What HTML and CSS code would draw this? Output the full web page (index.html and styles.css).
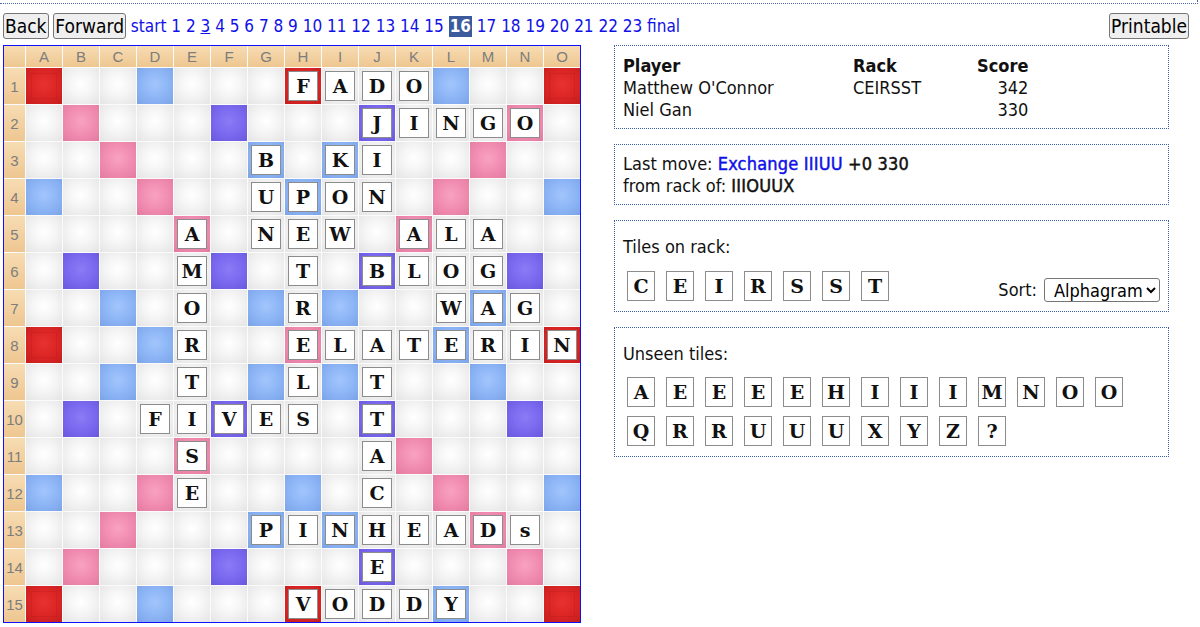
FILE: index.html
```html
<!DOCTYPE html>
<html>
<head>
<meta charset="utf-8">
<title>Game viewer</title>
<link rel="stylesheet" href="styles.css">
</head>
<body>
<div class="topline"></div>
<div class="nav">
  <div class="navleft"><button>Back</button> <button>Forward</button> <a href="#">start</a> <a href="#">1</a> <a href="#">2</a> <a href="#" class="hov">3</a> <a href="#">4</a> <a href="#">5</a> <a href="#">6</a> <a href="#">7</a> <a href="#">8</a> <a href="#">9</a> <a href="#">10</a> <a href="#">11</a> <a href="#">12</a> <a href="#">13</a> <a href="#">14</a> <a href="#">15</a> <span class="cur">16</span> <a href="#">17</a> <a href="#">18</a> <a href="#">19</a> <a href="#">20</a> <a href="#">21</a> <a href="#">22</a> <a href="#">23</a> <a href="#">final</a></div>
  <button class="print">Printable</button>
</div>
<div class="main">
  <div class="board">
    <i class="h"></i><i class="h">A</i><i class="h">B</i><i class="h">C</i><i class="h">D</i><i class="h">E</i><i class="h">F</i><i class="h">G</i><i class="h">H</i><i class="h">I</i><i class="h">J</i><i class="h">K</i><i class="h">L</i><i class="h">M</i><i class="h">N</i><i class="h">O</i>

    <i class="h">1</i><i class="c tw"></i><i class="c"></i><i class="c"></i><i class="c dl"></i><i class="c"></i><i class="c"></i><i class="c"></i><i class="c tw"><b class="t">F</b></i><i class="c"><b class="t">A</b></i><i class="c"><b class="t">D</b></i><i class="c"><b class="t">O</b></i><i class="c dl"></i><i class="c"></i><i class="c"></i><i class="c tw"></i>

    <i class="h">2</i><i class="c"></i><i class="c dw"></i><i class="c"></i><i class="c"></i><i class="c"></i><i class="c tl"></i><i class="c"></i><i class="c"></i><i class="c"></i><i class="c tl"><b class="t">J</b></i><i class="c"><b class="t">I</b></i><i class="c"><b class="t">N</b></i><i class="c"><b class="t">G</b></i><i class="c dw"><b class="t">O</b></i><i class="c"></i>

    <i class="h">3</i><i class="c"></i><i class="c"></i><i class="c dw"></i><i class="c"></i><i class="c"></i><i class="c"></i><i class="c dl"><b class="t">B</b></i><i class="c"></i><i class="c dl"><b class="t">K</b></i><i class="c"><b class="t">I</b></i><i class="c"></i><i class="c"></i><i class="c dw"></i><i class="c"></i><i class="c"></i>

    <i class="h">4</i><i class="c dl"></i><i class="c"></i><i class="c"></i><i class="c dw"></i><i class="c"></i><i class="c"></i><i class="c"><b class="t">U</b></i><i class="c dl"><b class="t">P</b></i><i class="c"><b class="t">O</b></i><i class="c"><b class="t">N</b></i><i class="c"></i><i class="c dw"></i><i class="c"></i><i class="c"></i><i class="c dl"></i>

    <i class="h">5</i><i class="c"></i><i class="c"></i><i class="c"></i><i class="c"></i><i class="c dw"><b class="t">A</b></i><i class="c"></i><i class="c"><b class="t">N</b></i><i class="c"><b class="t">E</b></i><i class="c"><b class="t">W</b></i><i class="c"></i><i class="c dw"><b class="t">A</b></i><i class="c"><b class="t">L</b></i><i class="c"><b class="t">A</b></i><i class="c"></i><i class="c"></i>

    <i class="h">6</i><i class="c"></i><i class="c tl"></i><i class="c"></i><i class="c"></i><i class="c"><b class="t">M</b></i><i class="c tl"></i><i class="c"></i><i class="c"><b class="t">T</b></i><i class="c"></i><i class="c tl"><b class="t">B</b></i><i class="c"><b class="t">L</b></i><i class="c"><b class="t">O</b></i><i class="c"><b class="t">G</b></i><i class="c tl"></i><i class="c"></i>

    <i class="h">7</i><i class="c"></i><i class="c"></i><i class="c dl"></i><i class="c"></i><i class="c"><b class="t">O</b></i><i class="c"></i><i class="c dl"></i><i class="c"><b class="t">R</b></i><i class="c dl"></i><i class="c"></i><i class="c"></i><i class="c"><b class="t">W</b></i><i class="c dl"><b class="t">A</b></i><i class="c"><b class="t">G</b></i><i class="c"></i>

    <i class="h">8</i><i class="c tw"></i><i class="c"></i><i class="c"></i><i class="c dl"></i><i class="c"><b class="t">R</b></i><i class="c"></i><i class="c"></i><i class="c dw"><b class="t">E</b></i><i class="c"><b class="t">L</b></i><i class="c"><b class="t">A</b></i><i class="c"><b class="t">T</b></i><i class="c dl"><b class="t">E</b></i><i class="c"><b class="t">R</b></i><i class="c"><b class="t">I</b></i><i class="c tw"><b class="t">N</b></i>

    <i class="h">9</i><i class="c"></i><i class="c"></i><i class="c dl"></i><i class="c"></i><i class="c"><b class="t">T</b></i><i class="c"></i><i class="c dl"></i><i class="c"><b class="t">L</b></i><i class="c dl"></i><i class="c"><b class="t">T</b></i><i class="c"></i><i class="c"></i><i class="c dl"></i><i class="c"></i><i class="c"></i>

    <i class="h">10</i><i class="c"></i><i class="c tl"></i><i class="c"></i><i class="c"><b class="t">F</b></i><i class="c"><b class="t">I</b></i><i class="c tl"><b class="t">V</b></i><i class="c"><b class="t">E</b></i><i class="c"><b class="t">S</b></i><i class="c"></i><i class="c tl"><b class="t">T</b></i><i class="c"></i><i class="c"></i><i class="c"></i><i class="c tl"></i><i class="c"></i>

    <i class="h">11</i><i class="c"></i><i class="c"></i><i class="c"></i><i class="c"></i><i class="c dw"><b class="t">S</b></i><i class="c"></i><i class="c"></i><i class="c"></i><i class="c"></i><i class="c"><b class="t">A</b></i><i class="c dw"></i><i class="c"></i><i class="c"></i><i class="c"></i><i class="c"></i>

    <i class="h">12</i><i class="c dl"></i><i class="c"></i><i class="c"></i><i class="c dw"></i><i class="c"><b class="t">E</b></i><i class="c"></i><i class="c"></i><i class="c dl"></i><i class="c"></i><i class="c"><b class="t">C</b></i><i class="c"></i><i class="c dw"></i><i class="c"></i><i class="c"></i><i class="c dl"></i>

    <i class="h">13</i><i class="c"></i><i class="c"></i><i class="c dw"></i><i class="c"></i><i class="c"></i><i class="c"></i><i class="c dl"><b class="t">P</b></i><i class="c"><b class="t">I</b></i><i class="c dl"><b class="t">N</b></i><i class="c"><b class="t">H</b></i><i class="c"><b class="t">E</b></i><i class="c"><b class="t">A</b></i><i class="c dw"><b class="t">D</b></i><i class="c"><b class="t">s</b></i><i class="c"></i>

    <i class="h">14</i><i class="c"></i><i class="c dw"></i><i class="c"></i><i class="c"></i><i class="c"></i><i class="c tl"></i><i class="c"></i><i class="c"></i><i class="c"></i><i class="c tl"><b class="t">E</b></i><i class="c"></i><i class="c"></i><i class="c"></i><i class="c dw"></i><i class="c"></i>

    <i class="h">15</i><i class="c tw"></i><i class="c"></i><i class="c"></i><i class="c dl"></i><i class="c"></i><i class="c"></i><i class="c"></i><i class="c tw"><b class="t">V</b></i><i class="c"><b class="t">O</b></i><i class="c"><b class="t">D</b></i><i class="c"><b class="t">D</b></i><i class="c dl"><b class="t">Y</b></i><i class="c"></i><i class="c"></i><i class="c tw"></i>
  </div>

  <div class="side">
    <div class="box players">
      <b>Player</b><b>Rack</b><b>Score</b>
      <span>Matthew O'Connor</span><span>CEIRSST</span><span class="num">342</span>
      <span>Niel Gan</span><span></span><span class="num">330</span>
    </div>
    <div class="box move">
      <div>Last move: <a href="#" class="mv">Exchange IIIUU</a> <span class="strong">+0 330</span></div>
      <div>from rack of: <span class="strong">IIIOUUX</span></div>
    </div>
    <div class="box rackbox">
      <div class="label">Tiles on rack:</div>
      <div class="rackrow">
        <div class="tiles">
          <b class="rt">C</b><b class="rt">E</b><b class="rt">I</b><b class="rt">R</b><b class="rt">S</b><b class="rt">S</b><b class="rt">T</b>
        </div>
        <div class="sort">Sort: <select><option>Alphagram</option></select></div>
      </div>
    </div>
    <div class="box unseen">
      <div class="label">Unseen tiles:</div>
      <div class="tiles">
        <b class="rt">A</b><b class="rt">E</b><b class="rt">E</b><b class="rt">E</b><b class="rt">E</b><b class="rt">H</b><b class="rt">I</b><b class="rt">I</b><b class="rt">I</b><b class="rt">M</b><b class="rt">N</b><b class="rt">O</b><b class="rt">O</b>
      </div>
      <div class="tiles">
        <b class="rt">Q</b><b class="rt">R</b><b class="rt">R</b><b class="rt">U</b><b class="rt">U</b><b class="rt">U</b><b class="rt">X</b><b class="rt">Y</b><b class="rt">Z</b><b class="rt">?</b>
      </div>
    </div>
  </div>
</div>
</body>
</html>
```

FILE: styles.css
```css
html, body {
  margin: 0;
  padding: 0;
  background: #ffffff;
}
body {
  font-family: "DejaVu Sans Condensed", "DejaVu Sans", Verdana, sans-serif;
  font-stretch: condensed;
  font-size: 18px;
  line-height: 22px;
  color: #111111;
}

.topline {
  height: 3px;
  margin-right: 2px;
  border-bottom: 1px dotted #4a67a8;
  border-right: 1px dotted #4a67a8;
}

.nav {
  display: flex;
  align-items: center;
  padding: 9px 11px 0 3px;
}
.navleft {
  white-space: nowrap;
  font-size: 17px;
}
.nav button {
  font-family: "DejaVu Sans Condensed", "DejaVu Sans", Verdana, sans-serif;
  font-stretch: condensed;
  font-size: 19px;
  line-height: 22px;
  padding: 1px 1px;
  border: 1px solid #767676;
  border-radius: 3px;
  background: #efefef;
  color: #000;
  vertical-align: middle;
}
.nav .print {
  margin-left: auto;
  padding: 1px 1px;
}
.nav a {
  color: #1010e8;
  text-decoration: none;
  vertical-align: middle;
}
.nav a.hov {
  text-decoration: underline;
}
.nav .cur {
  display: inline-block;
  vertical-align: middle;
  background: #3b5b9c;
  color: #ffffff;
  font-weight: bold;
  padding: 0 1px;
  line-height: 21px;
}

.main {
  display: flex;
  align-items: flex-start;
  margin-top: 6px;
  padding-left: 3px;
}

/* Board */
.board {
  display: grid;
  grid-template-columns: 21px repeat(15, 36px);
  grid-template-rows: 21px repeat(15, 36px);
  gap: 1px;
  background: #fbfbfb;
  border: 1px solid #1010ff;
}
.board i {
  font-style: normal;
}
.h {
  display: flex;
  align-items: center;
  justify-content: center;
  background: linear-gradient(#f7dcb3, #eec690);
  color: #7d7d7d;
  font-family: "Liberation Sans", Arial, sans-serif;
  font-stretch: normal;
  font-size: 15px;
  line-height: 1;
}
.c {
  display: flex;
  align-items: center;
  justify-content: center;
  background: radial-gradient(circle at 50% 45%, #ffffff 0%, #f6f6f6 40%, #e4e4e4 100%);
}
.tw {
  background: radial-gradient(circle at 50% 45%, #e83232 0%, #dc2626 50%, #c51d1d 100%);
}
.tw:empty {
  outline: 1px solid rgba(120, 0, 0, 0.1);
  outline-offset: -6px;
}
.dw {
  background: radial-gradient(circle at 50% 45%, #f9a2c0 0%, #f18db1 50%, #e37aa0 100%);
}
.dl {
  background: radial-gradient(circle at 50% 45%, #a2c5fc 0%, #8eb6f6 50%, #7aa3e8 100%);
}
.tl {
  background: radial-gradient(circle at 50% 45%, #8a7bf6 0%, #7b6aef 50%, #6858dc 100%);
}
.t, .rt {
  display: flex;
  align-items: center;
  justify-content: center;
  box-sizing: border-box;
  background: #ffffff;
  border: 1px solid #8c8c8c;
  font-family: "DejaVu Serif", "Liberation Serif", serif;
  font-stretch: normal;
  font-weight: bold;
  color: #111;
}
.t {
  width: 30px;
  height: 30px;
  font-size: 19px;
}

/* Side panels */
.side {
  width: 555px;
  margin-left: 33px;
  display: flex;
  flex-direction: column;
  gap: 15px;
}
.box {
  border: 1px dotted #3f5fa8;
  padding: 8px 8px 7px 8px;
}
.players {
  padding-top: 9px;
  display: grid;
  grid-template-columns: 230px 124px max-content;
}
.players .num {
  text-align: right;
}
.move .mv {
  color: #1010e8;
  text-decoration: none;
}
.move .mv, .move .strong {
  -webkit-text-stroke: 0.45px currentColor;
  letter-spacing: 0.2px;
}
.rackbox, .unseen {
  padding-top: 15px;
  padding-bottom: 10px;
}
.label {
  margin-bottom: 13px;
}
.unseen .label {
  margin-bottom: 12px;
}
.rackrow {
  display: flex;
  align-items: flex-end;
  justify-content: space-between;
}
.tiles {
  display: flex;
  gap: 11px;
  padding-left: 4px;
}
.unseen .tiles + .tiles {
  margin-top: 9px;
}
.rt {
  width: 28px;
  height: 30px;
  font-size: 19px;
}
.sort {
  display: flex;
  align-items: center;
  gap: 7px;
  margin-bottom: -1px;
}
.sort select {
  font-family: "DejaVu Sans Condensed", "DejaVu Sans", Verdana, sans-serif;
  font-stretch: condensed;
  font-size: 18px;
  height: 24px;
  padding: 0 0 0 5px;
  border: 1px solid #767676;
  border-radius: 3px;
  background: #ffffff;
  color: #000;
}
```
